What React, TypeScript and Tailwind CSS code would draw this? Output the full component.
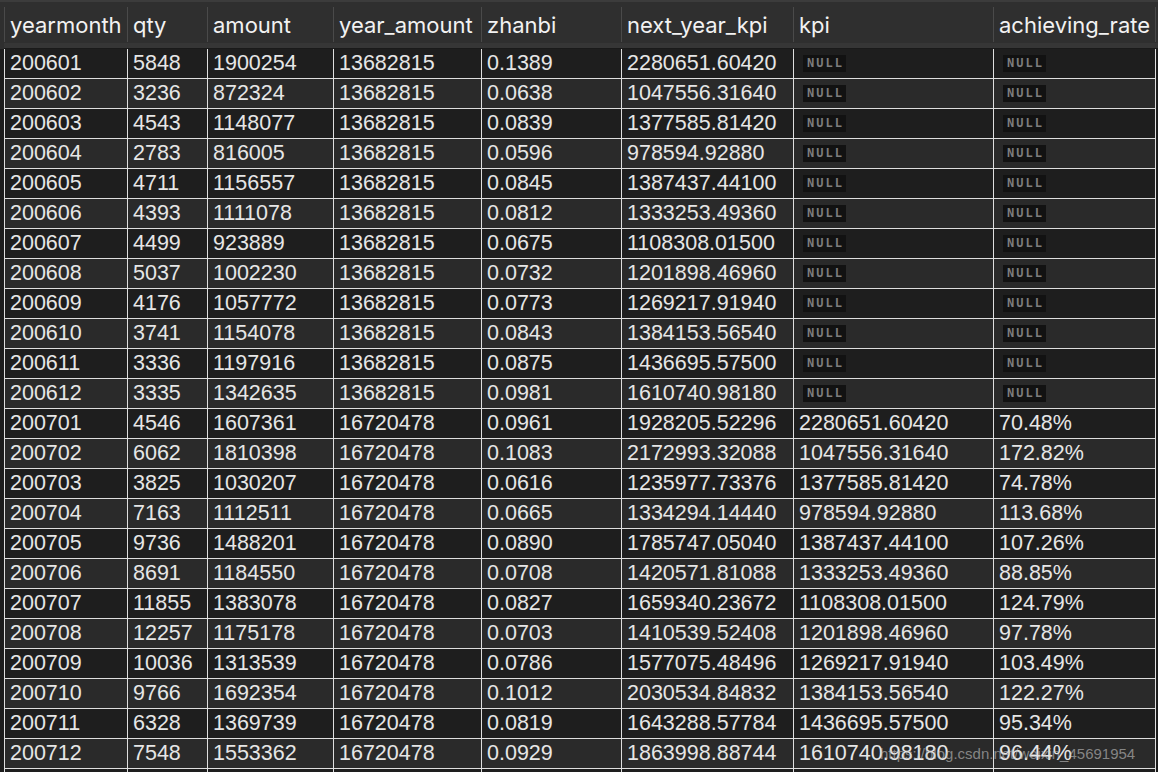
const cols = [
  { name: 'yearmonth', w: 'w-[123px]' },
  { name: 'qty', w: 'w-[80px]' },
  { name: 'amount', w: 'w-[126px]' },
  { name: 'year_amount', w: 'w-[148px]' },
  { name: 'zhanbi', w: 'w-[140px]' },
  { name: 'next_year_kpi', w: 'w-[172px]' },
  { name: 'kpi', w: 'w-[200px]' },
  { name: 'achieving_rate', w: 'w-[162px]' },
];

const rows: (string | null)[][] = [
  ['200601', '5848', '1900254', '13682815', '0.1389', '2280651.60420', null, null],
  ['200602', '3236', '872324', '13682815', '0.0638', '1047556.31640', null, null],
  ['200603', '4543', '1148077', '13682815', '0.0839', '1377585.81420', null, null],
  ['200604', '2783', '816005', '13682815', '0.0596', '978594.92880', null, null],
  ['200605', '4711', '1156557', '13682815', '0.0845', '1387437.44100', null, null],
  ['200606', '4393', '1111078', '13682815', '0.0812', '1333253.49360', null, null],
  ['200607', '4499', '923889', '13682815', '0.0675', '1108308.01500', null, null],
  ['200608', '5037', '1002230', '13682815', '0.0732', '1201898.46960', null, null],
  ['200609', '4176', '1057772', '13682815', '0.0773', '1269217.91940', null, null],
  ['200610', '3741', '1154078', '13682815', '0.0843', '1384153.56540', null, null],
  ['200611', '3336', '1197916', '13682815', '0.0875', '1436695.57500', null, null],
  ['200612', '3335', '1342635', '13682815', '0.0981', '1610740.98180', null, null],
  ['200701', '4546', '1607361', '16720478', '0.0961', '1928205.52296', '2280651.60420', '70.48%'],
  ['200702', '6062', '1810398', '16720478', '0.1083', '2172993.32088', '1047556.31640', '172.82%'],
  ['200703', '3825', '1030207', '16720478', '0.0616', '1235977.73376', '1377585.81420', '74.78%'],
  ['200704', '7163', '1112511', '16720478', '0.0665', '1334294.14440', '978594.92880', '113.68%'],
  ['200705', '9736', '1488201', '16720478', '0.0890', '1785747.05040', '1387437.44100', '107.26%'],
  ['200706', '8691', '1184550', '16720478', '0.0708', '1420571.81088', '1333253.49360', '88.85%'],
  ['200707', '11855', '1383078', '16720478', '0.0827', '1659340.23672', '1108308.01500', '124.79%'],
  ['200708', '12257', '1175178', '16720478', '0.0703', '1410539.52408', '1201898.46960', '97.78%'],
  ['200709', '10036', '1313539', '16720478', '0.0786', '1577075.48496', '1269217.91940', '103.49%'],
  ['200710', '9766', '1692354', '16720478', '0.1012', '2030534.84832', '1384153.56540', '122.27%'],
  ['200711', '6328', '1369739', '16720478', '0.0819', '1643288.57784', '1436695.57500', '95.34%'],
  ['200712', '7548', '1553362', '16720478', '0.0929', '1863998.88744', '1610740.98180', '96.44%'],
  ['', '', '', '', '', '', '', ''],
];

function NullBadge() {
  return (
    <span className="ml-[4px] inline-flex h-[17px] items-center bg-[#121212] pl-[4px] pr-[2px] font-['DejaVu_Sans_Mono',monospace] text-[12px] font-bold leading-none tracking-[2px] text-[#7d7d7d]">
      NULL
    </span>
  );
}

export default function App() {
  return (
    <div className="relative h-[772px] w-[1158px] overflow-hidden bg-[#1c1c1c]">
      {/* Header */}
      <div className="flex h-[49px] border-t-2 border-[#3c3c3c] bg-[#2f2f2f] pl-[4px]">
        <div className="flex h-[47px] flex-col">
          <div className="flex h-[41px]">
            {cols.map((c) => (
              <div key={c.name} className={`${c.w} flex items-start`}>
                <div className="mt-[5px] h-[35px] w-px bg-[#4a4a4a]" />
                <span className="self-center pl-[5px] pt-[5px] font-['Inter',sans-serif] text-[22px] text-[#f2f2f2]">
                  {c.name}
                </span>
              </div>
            ))}
            <div className="flex items-start">
              <div className="mt-[5px] h-[35px] w-px bg-[#4a4a4a]" />
            </div>
          </div>
          <div className="h-[5px] w-[1154px] bg-[#363636]" />
          <div className="h-px w-[1154px] bg-[#1a1a1a]" />
        </div>
      </div>

      {/* Rows */}
      <div className="flex flex-col pl-[4px]">
        {rows.map((r, i) => (
          <div
            key={i}
            className={`flex h-[30px] w-[1152px] border-b border-r border-[#dedede] ${i % 2 === 0 ? 'bg-[#1e1e1e]' : 'bg-[#2a2a2a]'}`}
          >
            {cols.map((c, j) => (
              <div
                key={c.name}
                className={`${c.w} flex items-center border-l border-[#dedede] pb-[1px] pl-[5px] font-['Liberation_Sans',Arial,sans-serif] text-[21.5px] text-[#e6e6e6]`}
              >
                {r[j] === null ? <NullBadge /> : r[j]}
              </div>
            ))}
          </div>
        ))}
      </div>

      {/* watermark */}
      <div className="absolute left-[880px] top-[743px] font-['Liberation_Sans',Arial,sans-serif] text-[15px] text-[#c4c4c4]/60">
        https://blog.csdn.net/weixin_45691954
      </div>
    </div>
  );
}
